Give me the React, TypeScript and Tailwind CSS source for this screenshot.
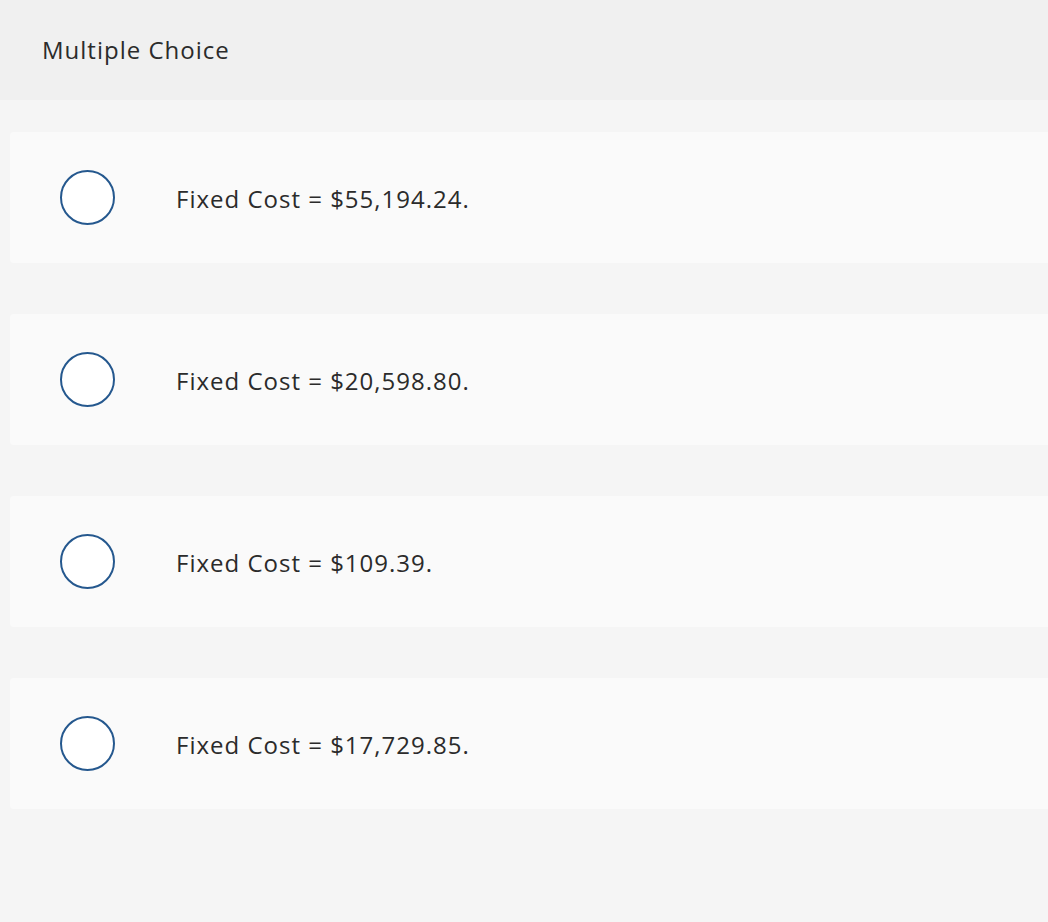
export default function App() {
  const options = [
    "Fixed Cost = $55,194.24.",
    "Fixed Cost = $20,598.80.",
    "Fixed Cost = $109.39.",
    "Fixed Cost = $17,729.85.",
  ];
  return (
    <div className="min-h-[922px] w-[1048px] overflow-hidden bg-[#f5f5f5] text-[#2b2b2b]" style={{ fontFamily: "'Open Sans', Lato, sans-serif" }}>
      <div className="flex h-[100px] items-center bg-[#f0f0f0] pl-[42px]">
        <h1 className="text-[24px] leading-[32px] font-normal tracking-[1px]">Multiple Choice</h1>
      </div>
      <div className="flex flex-col gap-[51px] pt-[32px] pl-[10px]">
        {options.map((item, index) => (
          <div key={index} className="flex h-[131px] w-[1050px] items-center rounded-[4px] bg-[#fafafa]">
            <div className="ml-[50px] h-[55px] w-[55px] rounded-full border-2 border-[#25588e] bg-white" />
            <p className="ml-[61px] pt-[2px] text-[24px] leading-[32px] tracking-[1px]">{item}</p>
          </div>
        ))}
      </div>
    </div>
  );
}
